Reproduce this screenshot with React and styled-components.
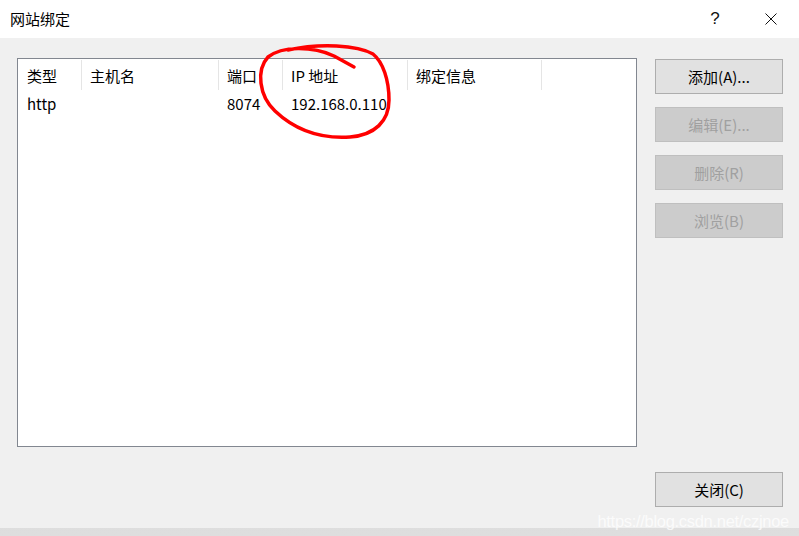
import React from "react";
import styled, { createGlobalStyle } from "styled-components";

const GlobalStyle = createGlobalStyle`
  html, body {
    margin: 0;
    padding: 0;
    background: #dcdcdc;
  }
  body {
    font-family: "Noto Sans CJK SC", "Noto Sans", "Liberation Sans", sans-serif;
    color: #000;
  }
`;

const Page = styled.div`
  position: relative;
  width: 799px;
  height: 536px;
  overflow: hidden;
  background: linear-gradient(#c4c4c4, #dedede);
`;

const Dialog = styled.div`
  width: 799px;
  height: 528px;
  display: flex;
  flex-direction: column;
  background: #f0f0f0;
`;

const TitleBar = styled.div`
  height: 38px;
  flex: none;
  background: #fff;
  display: flex;
  align-items: center;
  padding-left: 10px;
  box-sizing: border-box;
`;

const Title = styled.div`
  flex: 1;
  font-size: 15px;
  line-height: 20px;
  margin-top: -1px;
`;

const TitleButton = styled.div`
  width: 56px;
  height: 38px;
  display: flex;
  align-items: center;
  justify-content: center;
  font-family: "Liberation Sans", sans-serif;
  font-size: 17px;
  color: #111;
`;

const Body = styled.div`
  flex: 1;
  display: flex;
  flex-direction: column;
  padding: 20px 16px 22px 17px;
`;

const TopRow = styled.div`
  display: flex;
  gap: 18px;
`;

const ListView = styled.div`
  width: 620px;
  height: 389px;
  box-sizing: border-box;
  border: 1px solid #828790;
  background: #fff;
`;

const Row = styled.div`
  display: flex;
  height: ${({ $header }) => ($header ? "32px" : "24px")};
  align-items: ${({ $header }) => ($header ? "stretch" : "center")};
  font-size: 15px;
`;

const Cell = styled.div`
  width: ${({ $w }) => $w}px;
  flex: none;
  box-sizing: border-box;
  padding-left: ${({ $pad }) => $pad || 8}px;
  display: flex;
  align-items: center;
  white-space: nowrap;
  border-right: ${({ $sep }) => ($sep ? "1px solid #e5e5e5" : "none")};
  margin-top: ${({ $sep }) => ($sep ? "1px" : "0")};
  margin-bottom: ${({ $sep }) => ($sep ? "1px" : "0")};
`;

const ButtonCol = styled.div`
  display: flex;
  flex-direction: column;
  gap: 13px;
  padding-top: 1px;
`;

const Button = styled.div`
  width: 128px;
  height: 35px;
  box-sizing: border-box;
  display: flex;
  align-items: center;
  justify-content: center;
  font-size: 15px;
  background: ${({ $disabled }) => ($disabled ? "#cccccc" : "#e1e1e1")};
  border: 1px solid ${({ $disabled }) => ($disabled ? "#bfbfbf" : "#adadad")};
  color: ${({ $disabled }) => ($disabled ? "#a0a0a0" : "#000")};
`;

const BottomRow = styled.div`
  display: flex;
  justify-content: flex-end;
  margin-top: 25px;
`;

const Watermark = styled.div`
  position: absolute;
  right: 10px;
  bottom: 5px;
  font-family: "Liberation Sans", Arial, sans-serif;
  font-size: 16.5px;
  color: rgba(255, 255, 255, 0.75);
  letter-spacing: -0.3px;
`;

const Annotation = styled.svg`
  position: absolute;
  left: 0;
  top: 0;
  pointer-events: none;
`;

const columns = [
  { title: "类型", w: 64, pad: 9 },
  { title: "主机名", w: 137 },
  { title: "端口", w: 64 },
  { title: "IP 地址", w: 125 },
  { title: "绑定信息", w: 134 },
];

const rows = [["http", "", "8074", "192.168.0.110", ""]];

export default function App() {
  return (
    <Page>
      <GlobalStyle />
      <Dialog>
        <TitleBar>
          <Title>网站绑定</Title>
          <TitleButton>?</TitleButton>
          <TitleButton>
            <svg width="12" height="12" viewBox="0 0 12 12">
              <path d="M0.5 0.5 L11.5 11.5 M11.5 0.5 L0.5 11.5" stroke="#111" strokeWidth="1" />
            </svg>
          </TitleButton>
        </TitleBar>
        <Body>
          <TopRow>
            <ListView>
              <Row $header>
                {columns.map((c) => (
                  <Cell key={c.title} $w={c.w} $pad={c.pad} $sep>
                    {c.title}
                  </Cell>
                ))}
              </Row>
              {rows.map((r, i) => (
                <Row key={i}>
                  {r.map((v, j) => (
                    <Cell key={j} $w={columns[j].w} $pad={columns[j].pad}>
                      {v}
                    </Cell>
                  ))}
                </Row>
              ))}
            </ListView>
            <ButtonCol>
              <Button>添加(A)...</Button>
              <Button $disabled>编辑(E)...</Button>
              <Button $disabled>删除(R)</Button>
              <Button $disabled>浏览(B)</Button>
            </ButtonCol>
          </TopRow>
          <BottomRow>
            <Button>关闭(C)</Button>
          </BottomRow>
        </Body>
      </Dialog>
      <Annotation width="799" height="536">
        <path
          d="M354 67 L334 56 C312 46 282 46 268 57 C256 70 259 96 275 111 C294 129 320 139 350 137 C375 135 389 121 389 100 C389 80 383 62 373 54 C357 45 320 43 288 50"
          fill="none"
          stroke="#ff0000"
          strokeWidth="3.5"
          strokeLinecap="round"
          strokeLinejoin="round"
        />
      </Annotation>
      <Watermark>https://blog.csdn.net/czjnoe</Watermark>
    </Page>
  );
}
